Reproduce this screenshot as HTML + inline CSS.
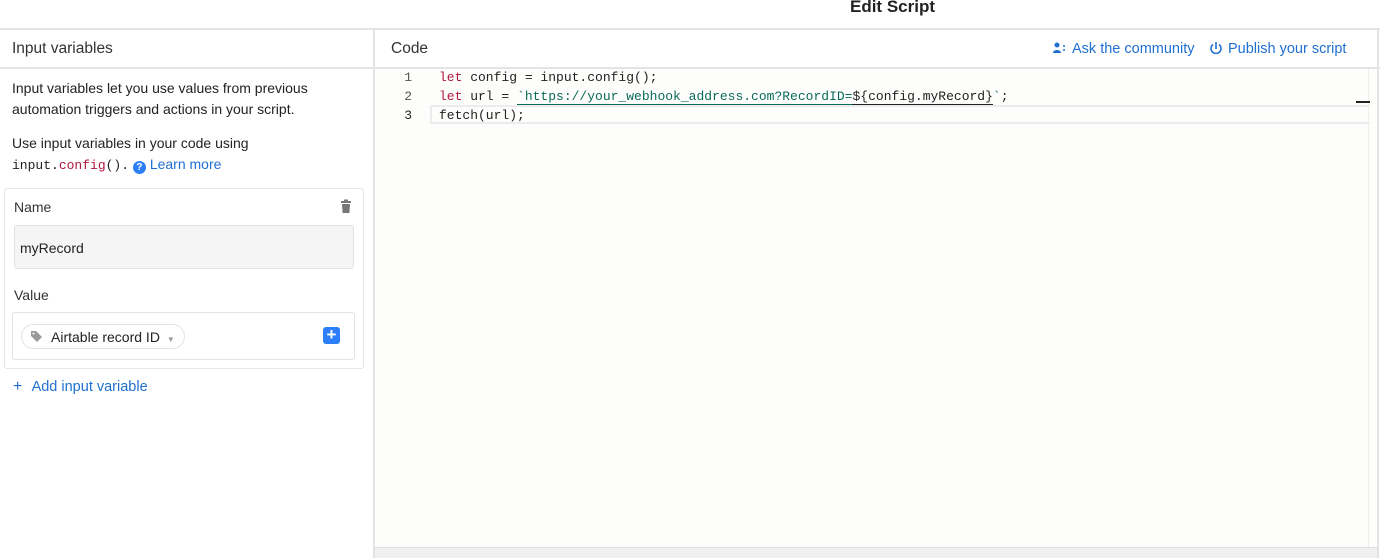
<!DOCTYPE html>
<html><head><style>
*{box-sizing:border-box;margin:0;padding:0}
body{width:1380px;height:558px;overflow:hidden;background:#fff;font-family:"Liberation Sans",sans-serif;color:#333;position:relative;font-size:14px}
.a{position:absolute}
.mono{font-family:"Liberation Mono",monospace}
.blue{color:#1f6fd1}
</style></head><body>
<div class="a" style="left:0;top:-3px;width:1380px;height:20px;text-align:center;padding-left:405px;font-size:17px;font-weight:bold;color:#222">Edit Script</div>
<div class="a" style="left:0;top:28px;width:1380px;height:2px;background:#e4e4e4"></div>
<div class="a" style="left:373px;top:29px;width:2px;height:529px;background:#e4e4e4"></div>
<div class="a" style="left:12px;top:40px;font-size:15.5px;color:#333">Input variables</div>
<div class="a" style="left:0;top:67px;width:374px;height:2px;background:#e4e4e4"></div>
<div class="a" style="left:12px;top:78px;line-height:21px;color:#222">Input variables let you use values from previous<br>automation triggers and actions in your script.</div>
<div class="a" style="left:12px;top:133px;line-height:21px;color:#222">Use input variables in your code using<br><span class="mono" style="font-size:13px">input.<span style="color:#b0163f">config</span>().</span> <span style="display:inline-block;width:13px;height:13px;border-radius:50%;background:#2d7ff9;color:#fff;font-size:10px;font-weight:bold;text-align:center;line-height:13px;vertical-align:-1px">?</span> <span class="blue">Learn more</span></div>
<div class="a" style="left:4px;top:188px;width:360px;height:181px;border:1px solid #e6e6e6;border-radius:3px"></div>
<div class="a" style="left:14px;top:199px">Name</div>
<svg class="a" style="left:340px;top:199px" width="12" height="15" viewBox="0 0 12 15"><rect x="1" y="2" width="10" height="2" fill="#777"/><rect x="4" y="0.5" width="4" height="2" fill="#777"/><path d="M2 5h8l-.6 9H2.6z" fill="#777"/></svg>
<div class="a" style="left:14px;top:225px;width:340px;height:44px;background:#f5f5f5;border:1px solid #e2e2e2;border-radius:3px;padding:14px 5px;color:#222">myRecord</div>
<div class="a" style="left:14px;top:287px">Value</div>
<div class="a" style="left:12px;top:312px;width:343px;height:48px;border:1px solid #e2e2e2;border-radius:3px"></div>
<div class="a" style="left:21px;top:324px;width:164px;height:25px;border:1px solid #e4e4e4;border-radius:13px;padding:4px 0 0 29px;color:#222">Airtable record ID <span style="font-size:8px;color:#999;margin-left:3px">▼</span></div>
<svg class="a" style="left:30px;top:330px" width="13" height="13" viewBox="0 0 13 13"><path d="M1 1h5l6 6-5 5-6-6z" fill="#999"/><circle cx="3.5" cy="3.5" r="1" fill="#fff"/></svg>
<div class="a" style="left:323px;top:327px;width:17px;height:17px;background:#2d7ff9;border-radius:3px;color:#fff;font-weight:bold;font-size:17px;line-height:16px;text-align:center">+</div>
<div class="a blue" style="left:13px;top:378px;font-size:14.5px"><span style="font-size:16px;margin-right:6px">+</span> Add input variable</div>
<div class="a" style="left:391px;top:40px;font-size:15.5px;color:#333">Code</div>
<div class="a blue" style="left:1053px;top:41px;font-size:14.5px"><svg width="13" height="11" viewBox="0 0 13 11" style="margin-right:6px"><circle cx="4" cy="3" r="2.5" fill="#1f6fd1"/><path d="M0 11c0-4 8-4 8 0z" fill="#1f6fd1"/><circle cx="11" cy="4" r="1" fill="#1f6fd1"/><circle cx="11" cy="8" r="1" fill="#1f6fd1"/></svg>Ask the community</div>
<div class="a blue" style="left:1209px;top:41px;font-size:14.5px"><svg width="14" height="13" viewBox="0 0 14 13" style="margin-right:5px;vertical-align:-1px"><path d="M4 3.5a5 5 0 1 0 6 0" fill="none" stroke="#1f6fd1" stroke-width="1.6"/><path d="M7 1v7" stroke="#1f6fd1" stroke-width="1.6"/></svg>Publish your script</div>
<div class="a" style="left:374px;top:67px;width:1006px;height:2px;background:#e4e4e4"></div>
<div class="a" style="left:1377px;top:29px;width:2px;height:529px;background:#e4e4e4"></div>
<div class="a" style="left:375px;top:69px;width:1002px;height:479px;background:#fdfdfc"></div>
<div class="a" style="left:1368px;top:69px;width:1px;height:479px;background:#eee"></div>
<div class="a" style="left:430px;top:105px;width:940px;height:19px;border:2px solid #ececec;border-right:none"></div>
<div class="a" style="left:1356px;top:101px;width:14px;height:2px;background:#222"></div>
<div class="a mono" style="left:390px;top:68px;width:22px;text-align:right;font-size:13px;line-height:19px;color:#555">1<br>2<br><span style="color:#222">3</span></div>
<div class="a mono" style="left:439px;top:68px;font-size:13px;line-height:19px;color:#222;white-space:pre"><span style="color:#b0163f">let</span> config = input.config();
<span style="color:#b0163f">let</span> url = <span style="color:#0b6b5a;border-bottom:1px solid #0b6b5a">`https://your_webhook_address.com?RecordID=</span><span style="border-bottom:1px solid #222">${config.myRecord}</span><span style="color:#0b6b5a">`</span>;
fetch(url);</div>
<div class="a" style="left:375px;top:547px;width:1002px;height:11px;background:#f0f0f0;border-top:1px solid #ddd"></div>
</body></html>
